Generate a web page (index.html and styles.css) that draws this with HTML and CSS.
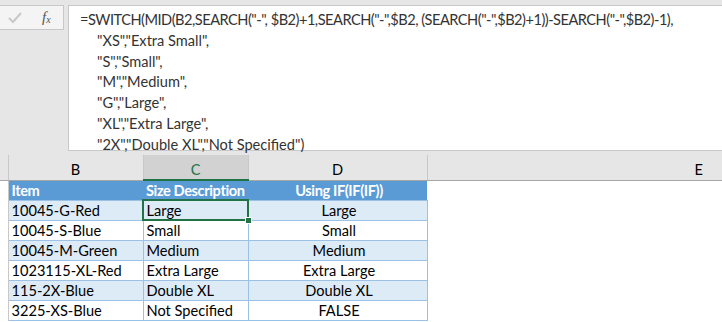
FILE: index.html
```html
<!DOCTYPE html>
<html lang="en">
<head>
  <meta charset="UTF-8">
  <title>Switch formula</title>
  <link rel="stylesheet" href="styles.css">
</head>
<body>
  <div class="formula-bar">
    <div class="fx-box">
      <svg class="check" width="14" height="12" viewBox="0 0 14 12">
        <path d="M1 6 L5 10 L13 1" fill="none" stroke="#c8c8c8" stroke-width="2"/>
      </svg>
      <span class="fx">f<sub>x</sub></span>
    </div>
    <div class="formula">
      <div class="line first">=SWITCH(MID(B2,SEARCH("-", $B2)+1,SEARCH("-",$B2, (SEARCH("-",$B2)+1))-SEARCH("-",$B2)-1),</div>
      <div class="line">"XS","Extra Small",</div>
      <div class="line">"S","Small",</div>
      <div class="line">"M","Medium",</div>
      <div class="line">"G","Large",</div>
      <div class="line">"XL","Extra Large",</div>
      <div class="line">"2X","Double XL","Not Specified")</div>
    </div>
  </div>

  <table class="sheet">
    <colgroup>
      <col class="c-row">
      <col class="c-b">
      <col class="c-c">
      <col class="c-d">
      <col class="c-e">
    </colgroup>
    <tr class="col-head">
      <th class="corner"></th>
      <th>B</th>
      <th class="active">C</th>
      <th>D</th>
      <th class="e">E</th>
    </tr>
    <tr class="title">
      <td class="rh"></td>
      <td>Item</td>
      <td>Size Description</td>
      <td class="mid">Using IF(IF(IF))</td>
      <td class="blank"></td>
    </tr>
    <tr class="band">
      <td class="rh"></td>
      <td>10045-G-Red</td>
      <td class="selected">Large<span class="handle"></span></td>
      <td class="mid">Large</td>
      <td class="blank"></td>
    </tr>
    <tr>
      <td class="rh"></td>
      <td>10045-S-Blue</td>
      <td>Small</td>
      <td class="mid">Small</td>
      <td class="blank"></td>
    </tr>
    <tr class="band">
      <td class="rh"></td>
      <td>10045-M-Green</td>
      <td>Medium</td>
      <td class="mid">Medium</td>
      <td class="blank"></td>
    </tr>
    <tr>
      <td class="rh"></td>
      <td>1023115-XL-Red</td>
      <td>Extra Large</td>
      <td class="mid">Extra Large</td>
      <td class="blank"></td>
    </tr>
    <tr class="band">
      <td class="rh"></td>
      <td>115-2X-Blue</td>
      <td>Double XL</td>
      <td class="mid">Double XL</td>
      <td class="blank"></td>
    </tr>
    <tr>
      <td class="rh"></td>
      <td>3225-XS-Blue</td>
      <td>Not Specified</td>
      <td class="mid">FALSE</td>
      <td class="blank"></td>
    </tr>
  </table>
</body>
</html>
```

FILE: styles.css
```css
body {
  margin: 0;
  background: #fff;
  font-family: "Lato", "Open Sans", sans-serif;
  overflow: hidden;
}

.formula-bar {
  display: flex;
  align-items: flex-start;
  gap: 4px;
  background: #e6e6e6;
  padding-top: 5px;
  height: 155px;
  box-sizing: border-box;
}

.fx-box {
  display: flex;
  align-items: center;
  width: 64px;
  height: 25px;
  box-sizing: border-box;
  background: #f4f4f4;
  border: 1px solid #c8c8c8;
  border-left: none;
  padding-left: 8px;
}

.check {
  margin-right: 20px;
}

.fx {
  font-family: "Liberation Serif", serif;
  font-style: italic;
  font-size: 15px;
  color: #555;
}

.fx sub {
  font-size: 10px;
  vertical-align: 0;
  position: relative;
  top: 1px;
}

.formula {
  flex: 1;
  background: #fff;
  border: 1px solid #c8c8c8;
  border-right: none;
  height: 146px;
  box-sizing: border-box;
  padding: 4px 0 0 11px;
  font-size: 14.6px;
  color: #333;
}

.line {
  height: 20.8px;
  line-height: 20.8px;
  padding-left: 17px;
  white-space: nowrap;
}

.line.first {
  padding-left: 0;
  letter-spacing: -0.5px;
}

.sheet {
  border-collapse: collapse;
  table-layout: fixed;
  width: 740px;
  font-size: 14.6px;
  color: #000;
}

.c-row { width: 8px; }
.c-b { width: 135px; }
.c-c { width: 105px; }
.c-d { width: 179px; }
.c-e { width: 313px; }

.sheet td,
.sheet th {
  height: 20px;
  padding: 0 0 0 3px;
  white-space: nowrap;
  box-sizing: border-box;
}

.col-head th {
  height: 25px;
  padding: 5px 0 0;
  background: #e6e6e6;
  font-weight: normal;
  border-bottom: 1px solid #a6a6a6;
  border-right: 1px solid #c8c8c8;
  border-top: none;
  text-align: center;
  vertical-align: middle;
}

.col-head th.active {
  background: #d2d2d2;
  color: #217346;
  border-bottom: 2px solid #217346;
}

.col-head th.e {
  text-align: right;
  padding-right: 37px;
  border-right: none;
}

.sheet td {
  border-top: 1px solid #9bc2e6;
  border-right: 1px solid #9bc2e6;
}

.sheet td.rh {
  border-top: none;
  border-right: 1px solid #c8c8c8;
  padding: 0;
}

.sheet td.blank {
  border: none;
}

.sheet tr:last-child td {
  border-bottom: 1px solid #9bc2e6;
}

.sheet tr:last-child td.rh,
.sheet tr:last-child td.blank {
  border-bottom: none;
}

.title td {
  background: #5b9bd5;
  color: #fff;
  font-weight: bold;
  letter-spacing: -0.4px;
  border-right: none;
}

.title td.rh,
.title td.blank {
  background: #fff;
}

.band td {
  background: #ddebf7;
}

.band td.rh,
.band td.blank {
  background: #fff;
}

.mid {
  text-align: center;
}

.sheet td.selected {
  position: relative;
  outline: 2px solid #217346;
  outline-offset: -1px;
}

.handle {
  position: absolute;
  right: -4px;
  bottom: -4px;
  width: 5px;
  height: 5px;
  background: #217346;
  border: 1px solid #fff;
}
```
